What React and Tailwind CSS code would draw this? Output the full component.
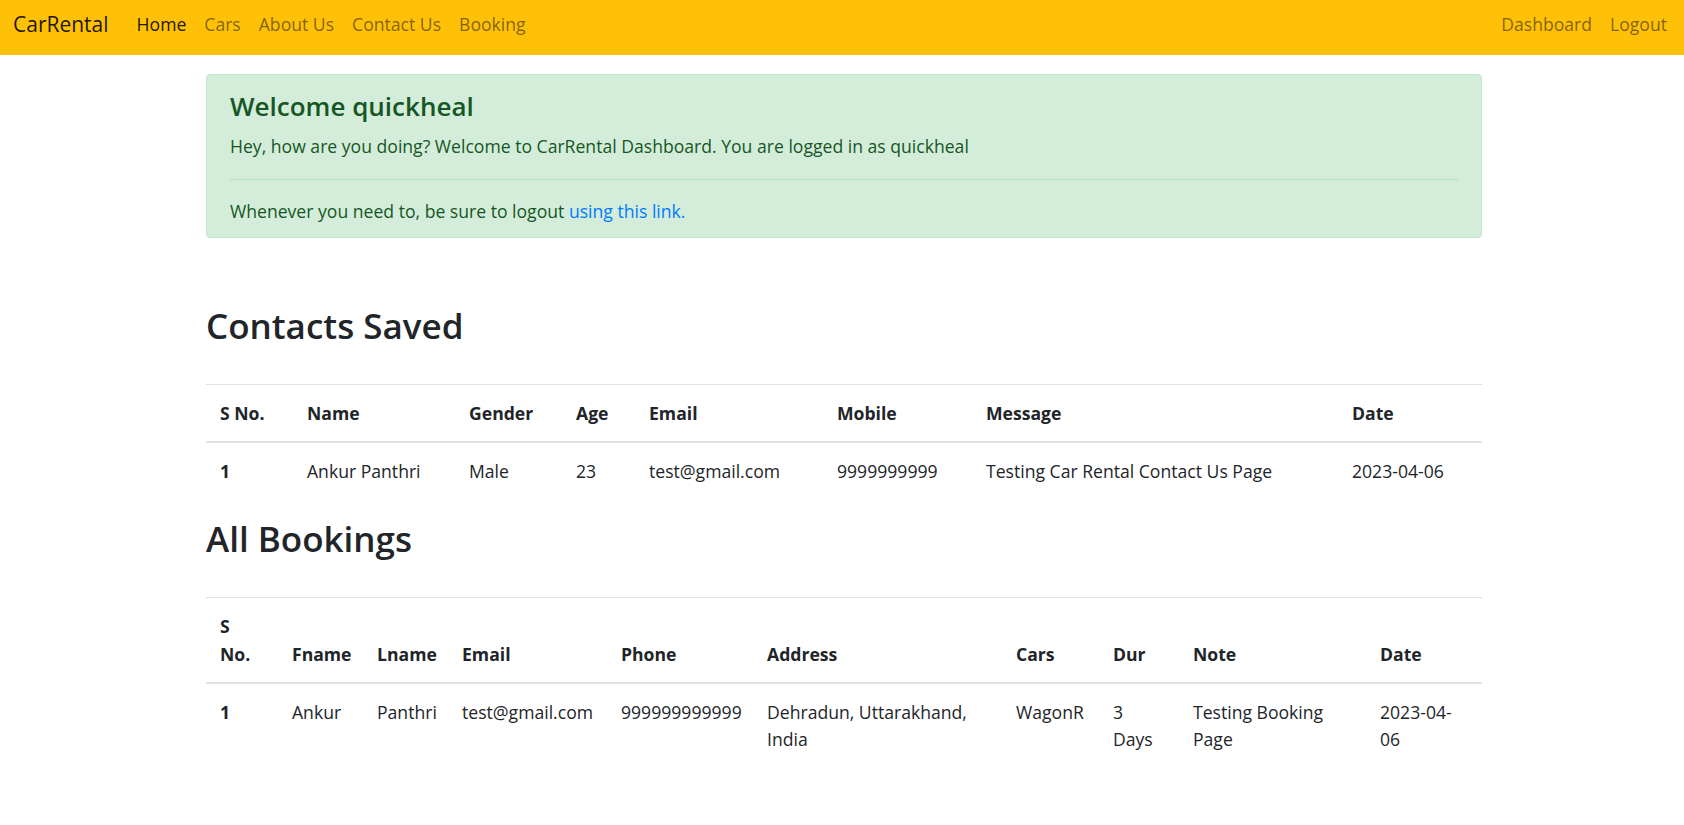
import React from 'react';

const contactCols = [
  { label: 'S No.', w: 'w-[87px]' },
  { label: 'Name', w: 'w-[162px]' },
  { label: 'Gender', w: 'w-[107px]' },
  { label: 'Age', w: 'w-[73px]' },
  { label: 'Email', w: 'w-[188px]' },
  { label: 'Mobile', w: 'w-[149px]' },
  { label: 'Message', w: 'w-[366px]' },
  { label: 'Date', w: 'w-[144px]' },
];

const contactRows = [
  ['1', 'Ankur Panthri', 'Male', '23', 'test@gmail.com', '9999999999', 'Testing Car Rental Contact Us Page', '2023-04-06'],
];

const bookingCols = [
  { label: 'S No.', w: 'w-[72px]' },
  { label: 'Fname', w: 'w-[85px]' },
  { label: 'Lname', w: 'w-[85px]' },
  { label: 'Email', w: 'w-[159px]' },
  { label: 'Phone', w: 'w-[146px]' },
  { label: 'Address', w: 'w-[249px]' },
  { label: 'Cars', w: 'w-[97px]' },
  { label: 'Dur', w: 'w-[80px]' },
  { label: 'Note', w: 'w-[187px]' },
  { label: 'Date', w: 'w-[116px]' },
];

const bookingRows = [
  ['1', 'Ankur', 'Panthri', 'test@gmail.com', '999999999999', 'Dehradun, Uttarakhand, India', 'WagonR', '3 Days', 'Testing Booking Page', '2023-04-06'],
];

const DataTable = ({ cols, rows }) => (
  <table className="w-full table-fixed border-collapse text-[#212529]">
    <thead>
      <tr>
        {cols.map(c => (
          <th
            key={c.label}
            className={`${c.w} text-left align-bottom font-bold px-[14px] pt-[15px] pb-[13px] border-t border-t-[#dee2e6] border-b-2 border-b-[#dee2e6]`}
          >
            {c.label}
          </th>
        ))}
      </tr>
    </thead>
    <tbody>
      {rows.map((r, i) => (
        <tr key={i}>
          {r.map((cell, j) => (
            <td key={j} className={`align-top px-[14px] pt-[15px] pb-[13px] ${j === 0 ? 'font-bold' : ''}`}>
              {cell}
            </td>
          ))}
        </tr>
      ))}
    </tbody>
  </table>
);

export default function App() {
  return (
    <div className="min-h-screen bg-white text-[17.6px] leading-[27.6px] text-[#212529] font-['Segoe_UI','Open_Sans',sans-serif]">
      {/* barra de navegación */}
      <nav className="h-[55px] bg-[#ffc107] flex items-center justify-between px-[13px] pb-[6px]">
        <div className="flex items-center">
          <a href="#" className="text-[21px] text-black/90 mr-[19px]">CarRental</a>
          <ul className="flex items-center">
            <li><a href="#" className="px-[9px] text-black/90">Home</a></li>
            <li><a href="#" className="px-[9px] text-black/50">Cars</a></li>
            <li><a href="#" className="px-[9px] text-black/50">About Us</a></li>
            <li><a href="#" className="px-[9px] text-black/50">Contact Us</a></li>
            <li><a href="#" className="px-[9px] text-black/50">Booking</a></li>
          </ul>
        </div>
        <ul className="flex items-center">
          <li><a href="#" className="px-[9px] text-black/50">Dashboard</a></li>
          <li><a href="#" className="pl-[9px] pr-[4px] text-black/50">Logout</a></li>
        </ul>
      </nav>

      <div className="w-[1276px] ml-[206px] pt-[19px]">
        <div className="bg-[#d4edda] border border-[#c3e6cb] text-[#155724] rounded-[4px] px-[23px] pt-[15px] pb-[12px]">
          <h4 className="text-[26px] font-semibold leading-[33px] mb-[10px]">Welcome quickheal</h4>
          <p>Hey, how are you doing? Welcome to CarRental Dashboard. You are logged in as quickheal</p>
          <hr className="mt-[18px] mb-[18px] border-t border-[#b1dfbb]" />
          <p>
            Whenever you need to, be sure to logout <a href="#" className="text-[#007bff]">using this link.</a>
          </p>
        </div>

        <h2 className="mt-[66px] text-[35px] font-semibold leading-[44px] mb-[36px]">Contacts Saved</h2>
        <DataTable cols={contactCols} rows={contactRows} />

        <h2 className="mt-[19px] text-[35px] font-semibold leading-[44px] mb-[36px]">All Bookings</h2>
        <DataTable cols={bookingCols} rows={bookingRows} />
      </div>
    </div>
  );
}
